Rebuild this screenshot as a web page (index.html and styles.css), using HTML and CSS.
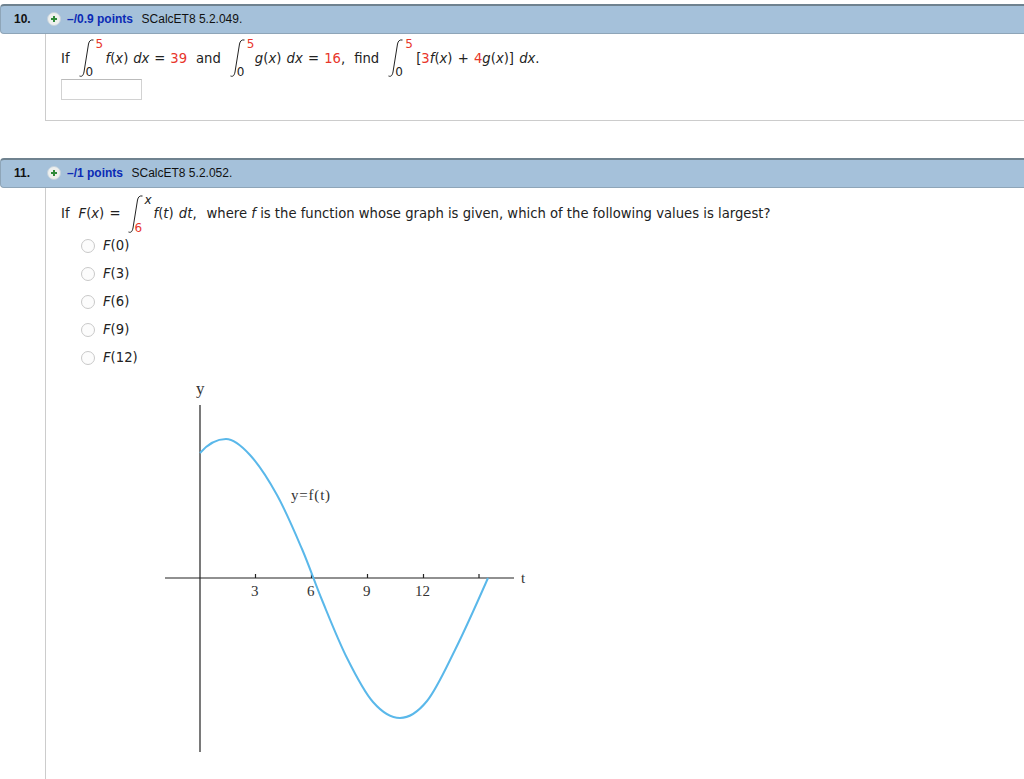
FILE: index.html
```html
<!DOCTYPE html>
<html lang="en">
<head>
<meta charset="utf-8">
<title>Questions</title>
<link rel="stylesheet" href="styles.css">
</head>
<body>
<section class="question q10">
  <header class="bar">
    <span class="num">10.</span>
    <svg class="plus" width="14" height="14" viewBox="0 0 14 14"><circle cx="7" cy="7" r="6.5" fill="#eef0ee" stroke="#c4d2dc"/><path d="M7 4v6M4 7h6" stroke="#2f8a3a" stroke-width="2"/></svg>
    <span class="pts">–/0.9 points</span>
    <span class="ref">SCalcET8 5.2.049.</span>
  </header>
  <div class="panel panel-a">
    <div class="math">
      <span class="word">If</span>
      <span class="int first"><svg width="15" height="38" viewBox="0 0 15 38"><path d="M.5 37c2.5 1 3.8-.5 4.5-4L9.5 5c.7-3 2-4.5 5-4" fill="none" stroke="#222"/></svg><span class="up red">5</span><span class="low">0</span></span>
      <span class="expr snug"><i>f</i>(<i>x</i>) <i>dx</i> = <span class="red">39</span></span>
      <span class="word">and</span>
      <span class="int"><svg width="15" height="38" viewBox="0 0 15 38"><path d="M.5 37c2.5 1 3.8-.5 4.5-4L9.5 5c.7-3 2-4.5 5-4" fill="none" stroke="#222"/></svg><span class="up red">5</span><span class="low">0</span></span>
      <span class="expr"><i>g</i>(<i>x</i>) <i>dx</i> = <span class="red">16</span>,</span>
      <span class="word">find</span>
      <span class="int last"><svg width="15" height="38" viewBox="0 0 15 38"><path d="M.5 37c2.5 1 3.8-.5 4.5-4L9.5 5c.7-3 2-4.5 5-4" fill="none" stroke="#222"/></svg><span class="up red">5</span><span class="low">0</span></span>
      <span class="expr">[<span class="red">3</span><i>f</i>(<i>x</i>) + <span class="red">4</span><i>g</i>(<i>x</i>)] <i>dx</i>.</span>
    </div>
    <div class="answer"></div>
  </div>
</section>
<section class="question q11">
  <header class="bar">
    <span class="num">11.</span>
    <svg class="plus" width="14" height="14" viewBox="0 0 14 14"><circle cx="7" cy="7" r="6.5" fill="#eef0ee" stroke="#c4d2dc"/><path d="M7 4v6M4 7h6" stroke="#2f8a3a" stroke-width="2"/></svg>
    <span class="pts">–/1 points</span>
    <span class="ref">SCalcET8 5.2.052.</span>
  </header>
  <div class="panel panel-b">
    <div class="math">
      <span class="word">If</span>
      <span class="expr"><i>F</i>(<i>x</i>) =</span>
      <span class="int tight"><svg width="15" height="38" viewBox="0 0 15 38"><path d="M.5 37c2.5 1 3.8-.5 4.5-4L9.5 5c.7-3 2-4.5 5-4" fill="none" stroke="#222"/></svg><i class="up">x</i><span class="low red">6</span></span>
      <span class="expr"><i>f</i>(<i>t</i>) <i>dt</i>,</span>
      <span class="word tail">where <i>f</i> is the function whose graph is given, which of the following values is largest?</span>
    </div>
    <ul class="choices">
      <li><span class="radio"></span><span class="opt"><i>F</i>(0)</span></li>
      <li><span class="radio"></span><span class="opt"><i>F</i>(3)</span></li>
      <li><span class="radio"></span><span class="opt"><i>F</i>(6)</span></li>
      <li><span class="radio"></span><span class="opt"><i>F</i>(9)</span></li>
      <li><span class="radio"></span><span class="opt"><i>F</i>(12)</span></li>
    </ul>
    <svg class="graph" width="370" height="380" viewBox="165 378 370 380">
      <g stroke="#222" stroke-width="1.2" fill="none">
        <path d="M200 405V752M165 578H514"/>
        <path d="M255.5 574v4M311.5 574v4M367.5 574v4M423.5 574v4M479 574v4"/>
      </g>
      <path d="M200 453C207 445 216 439 226 439C234 439 241.5 445.7 250 455C258.5 464.3 268.3 479.3 277 495C285.7 510.7 294.5 531.5 302 549C309.5 566.5 314.5 581.8 322 600C329.5 618.2 338.5 641 347 658C355.5 675 364.2 692 373 702C381.8 712 391 718 400 718C409 718 417.8 712.3 427 701C436.2 689.7 444.8 670.5 455 650C465.2 629.5 477 603 488 578" fill="none" stroke="#5ab8ea" stroke-width="2"/>
      <g class="gt">
        <text x="196" y="394" class="big">y</text>
        <text x="291" y="500" class="eq">y=f(t)</text>
        <text x="251" y="596">3</text>
        <text x="307" y="596">6</text>
        <text x="363" y="596">9</text>
        <text x="415" y="596">12</text>
        <text x="521" y="583">t</text>
      </g>
    </svg>
  </div>
</section>
</body>
</html>
```
FILE: styles.css
```css
html, body { margin: 0; padding: 0; background: #fff; }
body { height: 779px; overflow: hidden; font-family: "DejaVu Sans", sans-serif; font-size: 13.2px; color: #222; }
.question { display: block; }
.q10 { padding-top: 4px; }
.q11 { margin-top: 37px; }
.bar {
  box-sizing: border-box; height: 30px; display: flex; align-items: center;
  background: #a5c1da; border: 1px solid #8ea5b8; border-top: 2px solid #6f828f; border-right: 0;
  border-radius: 4px 0 0 4px; font-family: "Liberation Sans", Arial, sans-serif; font-size: 12px; color: #111;
  padding-left: 13px; padding-bottom: 1px;
}
.num { font-weight: bold; width: 33px; }
.plus { margin-right: 6px; flex: none; }
.pts { font-weight: bold; color: #0b2bb5; margin-right: 8.5px; }
.panel { margin-left: 45px; border-left: 1px solid #ccc; padding-left: 15px; }
.panel-a { height: 87px; box-sizing: border-box; border-bottom: 1px solid #ccc; padding-top: 5px; }
.panel-b { height: 600px; padding-top: 8px; }
.math { display: flex; align-items: center; height: 38px; gap: 9px; }
.panel-b .math { height: 36px; }
.panel-b .word, .panel-b .expr { top: -1px; }
.word, .expr { white-space: nowrap; position: relative; }
.expr { word-spacing: 1px; }
.expr.snug { word-spacing: .7px; }
.tail { margin-left: 1px; }
.int { display: block; position: relative; width: 16px; height: 38px; flex: none; }
.int.first { width: 18px; }
.int.last { width: 19px; }
.int.tight { margin-left: -2px; width: 17px; }
.int svg { display: block; }
.up, .low { position: absolute; font-size: 12px; line-height: 12px; }
.up { left: 17px; top: -1px; }
.low { left: 7px; bottom: -1px; }
.red { color: #e8362b; }
.answer { width: 81px; height: 21px; box-sizing: border-box; border: 1px solid #d2d2d2; border-top-color: #bbb; margin-top: 2px; }
.choices { list-style: none; margin: 0; padding: 0 0 0 20px; }
.choices li { display: flex; align-items: center; height: 28px; gap: 8px; }
.radio { width: 12px; height: 12px; border: 1px solid #c9c9c9; border-radius: 50%; background: #fcfcfc; flex: none; }
.opt { position: relative; top: -1px; }
.graph { display: block; margin: 6px 0 0 104px; }
.gt { font-family: "Liberation Serif", serif; font-size: 15px; fill: #333; }
.eq { letter-spacing: .8px; }
.big { font-size: 17px; }
```
